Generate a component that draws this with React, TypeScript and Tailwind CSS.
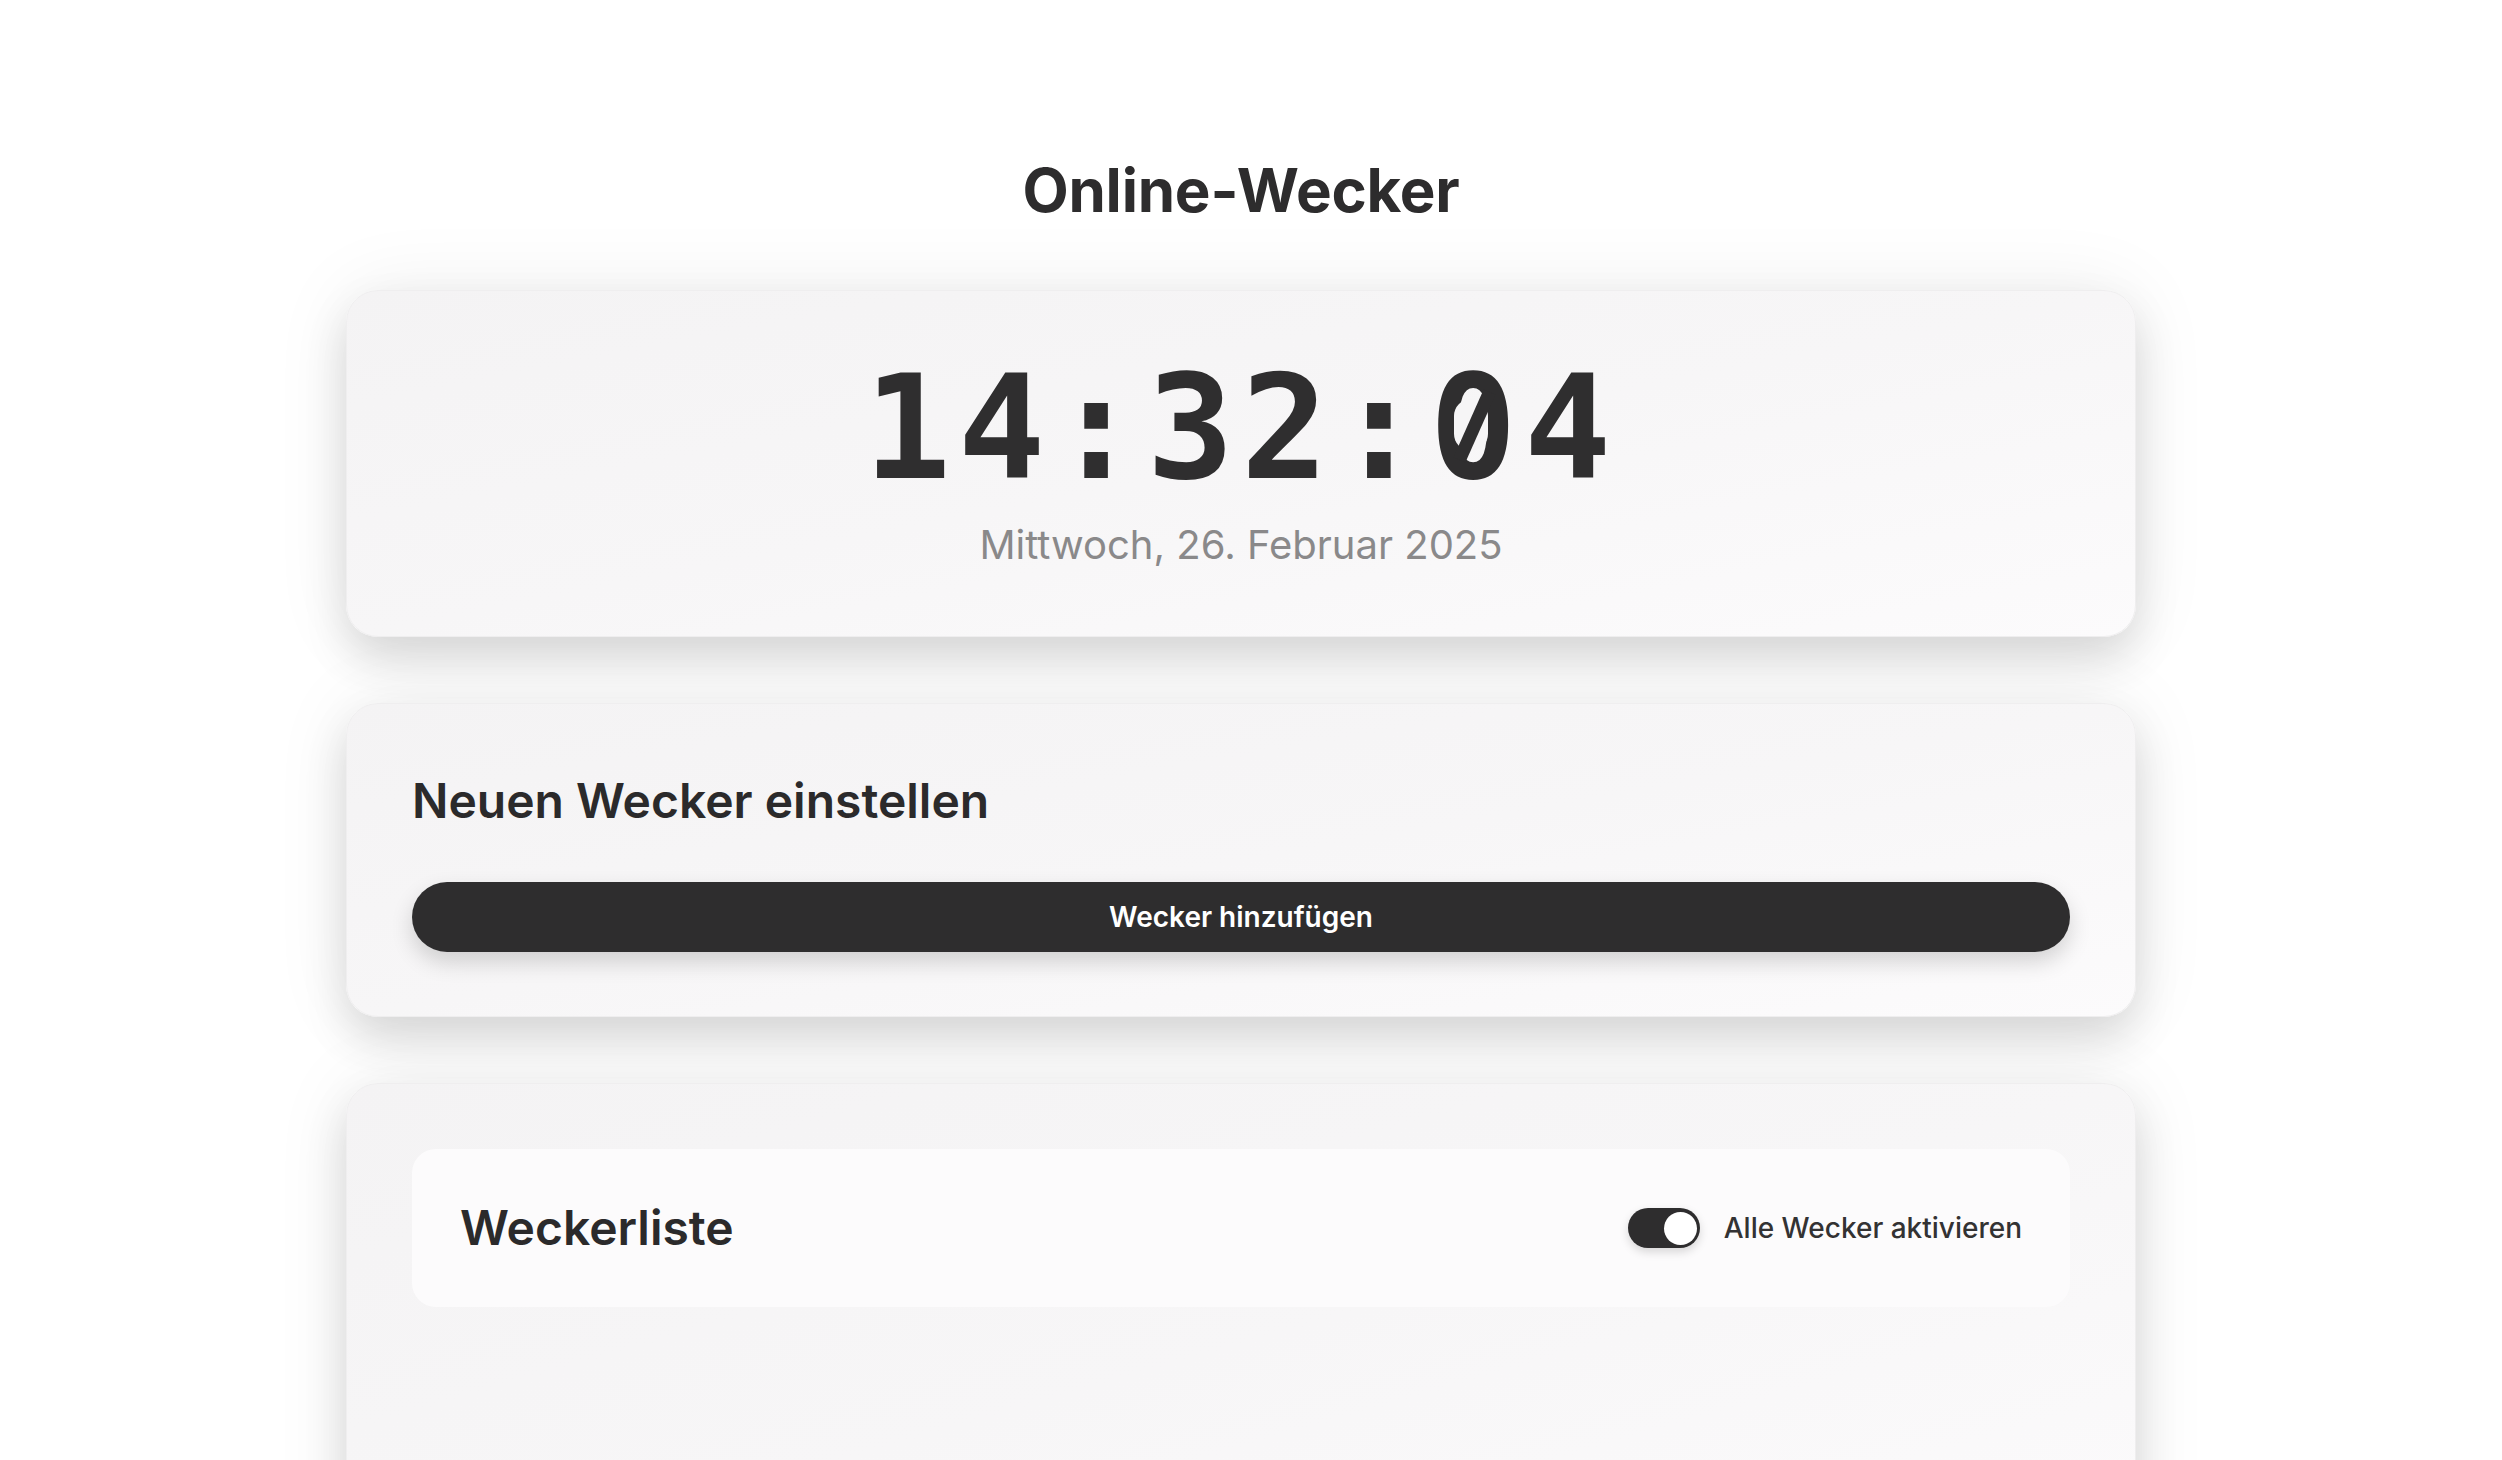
import React, { useState } from "react";

const sans = { fontFamily: "Inter, 'Noto Sans', 'Liberation Sans', sans-serif" };
const mono = { fontFamily: "'DejaVu Sans Mono', 'Liberation Mono', monospace" };

const cardClass =
  "w-[1790px] rounded-[32px] border border-[#efeeef] bg-gradient-to-br from-[#f4f3f4] via-[#f7f6f7] to-[#fcfbfc] shadow-[0_22px_44px_rgba(0,0,0,0.13),0_0_80px_rgba(0,0,0,0.07)]";

// Zero with a diagonal slash through its counter
function SlashedZero() {
  return (
    <span className="relative inline-block">
      0
      <span className="absolute left-[24px] top-[44px] h-[52px] w-[34px] rounded-full bg-[#f6f5f6]" />
      <span className="absolute left-[38px] top-[34px] h-[74px] w-[13px] rotate-[24deg] bg-[#2f2e2f]" />
    </span>
  );
}

function Toggle({ on, onChange }: { on: boolean; onChange: () => void }) {
  return (
    <button
      type="button"
      onClick={onChange}
      className={`relative flex h-[40px] w-[72px] items-center rounded-full px-[3px] shadow-[0_4px_10px_rgba(0,0,0,0.15)] ${
        on ? "justify-end bg-[#2e2d2e]" : "justify-start bg-[#cfcfcf]"
      }`}
    >
      <span className="block h-[33px] w-[33px] rounded-full bg-white" />
    </button>
  );
}

export default function App() {
  const [allOn, setAllOn] = useState(true);

  return (
    <div className="h-screen overflow-hidden bg-white text-[#2d2c2d]" style={sans}>
      <div className="flex flex-col items-center pr-[20px] pt-[154px]">
        <h1 className="text-[60px] font-bold leading-[72px] tracking-[-0.2px] text-[#2d2c2d]">
          Online-Wecker
        </h1>

        <div className="mt-[64px] flex flex-col gap-[66px]">
          {/* Current time */}
          <section className={`${cardClass} flex flex-col items-center pb-[67px] pt-[64px]`}>
            <div
              className="text-[145px] font-bold leading-none tracking-[7px] text-[#2f2e2f]"
              style={mono}
            >
              14:32:
              <SlashedZero />4
            </div>
            <div className="mt-[21px] text-[40px] leading-[48px] text-[#8a898a]">
              Mittwoch, 26. Februar 2025
            </div>
          </section>

          {/* New alarm */}
          <section className={`${cardClass} px-[65px] pb-[64px] pt-[65px]`}>
            <h2 className="text-[48px] font-semibold leading-[64px] text-[#2b2a2b]">
              Neuen Wecker einstellen
            </h2>
            <button
              type="button"
              className="mt-[49px] flex h-[70px] w-full items-center justify-center rounded-full bg-[#2e2d2e] text-[28px] font-semibold text-white shadow-[0_10px_22px_rgba(0,0,0,0.16)]"
            >
              Wecker hinzufügen
            </button>
          </section>

          {/* Alarm list */}
          <section className={`${cardClass} h-[520px] px-[65px] pt-[65px]`}>
            <div className="flex items-center justify-between rounded-[24px] bg-[#fcfbfc] px-[48px] py-[50px]">
              <h2 className="text-[48px] font-semibold leading-[58px] text-[#2b2a2b]">
                Weckerliste
              </h2>
              <label className="flex items-center gap-[24px]">
                <Toggle on={allOn} onChange={() => setAllOn(!allOn)} />
                <span className="text-[28px] font-medium text-[#333233]">Alle Wecker aktivieren</span>
              </label>
            </div>
          </section>
        </div>
      </div>
    </div>
  );
}
